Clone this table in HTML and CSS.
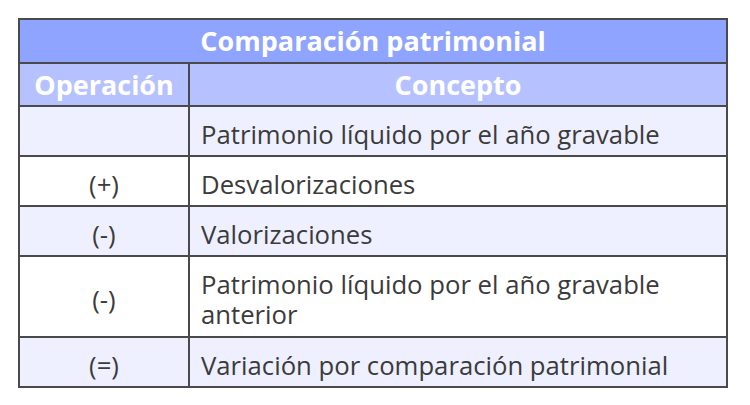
FILE: index.html
```html
<!DOCTYPE html>
<html lang="es">
<head>
<meta charset="utf-8">
<link rel="stylesheet" href="styles.css">
</head>
<body>
<table class="cmp">
  <colgroup><col class="c-op"><col class="c-concept"></colgroup>
  <thead>
    <tr class="title"><th colspan="2">Comparación patrimonial</th></tr>
    <tr class="head"><th class="op">Operación</th><th>Concepto</th></tr>
  </thead>
  <tbody>
    <tr class="alt"><td class="op"></td><td>Patrimonio líquido por el año gravable</td></tr>
    <tr><td class="op">(+)</td><td>Desvalorizaciones</td></tr>
    <tr class="alt"><td class="op">(-)</td><td>Valorizaciones</td></tr>
    <tr class="two"><td class="op">(-)</td><td>Patrimonio líquido por el año gravable<br>anterior</td></tr>
    <tr class="alt"><td class="op">(=)</td><td>Variación por comparación patrimonial</td></tr>
  </tbody>
</table>
</body>
</html>
```
FILE: styles.css
```css
html, body {
  margin: 0;
  padding: 0;
  background: #ffffff;
}
body {
  padding: 18px 0 0 18px;
  font-family: "Open Sans", "Noto Sans", sans-serif;
  color: #3b3b3b;
}
.cmp {
  border-collapse: collapse;
  table-layout: fixed;
  width: 710px;
  border: 2px solid #4a4a4a;
}
.c-op {
  width: 170px;
}
.cmp th, .cmp td {
  border: 2px solid #4a4a4a;
  padding: 0 11px;
}
.cmp th {
  color: #ffffff;
  font-weight: 700;
  font-size: 27px;
  line-height: 34px;
  text-align: center;
  white-space: nowrap;
}
.title th {
  background: #8fa4ff;
  height: 42px;
}
.head th {
  background: #b6c2ff;
  height: 41px;
}
.cmp td {
  font-size: 25.7px;
  line-height: 30px;
  padding-top: 13px;
  padding-bottom: 5px;
  vertical-align: middle;
  background: #ffffff;
}
.cmp tr.two td {
  padding-bottom: 6px;
}
.cmp tr.alt td {
  background: #eef0ff;
}
.cmp .op {
  padding-left: 0;
  padding-right: 0;
  text-align: center;
}
```
